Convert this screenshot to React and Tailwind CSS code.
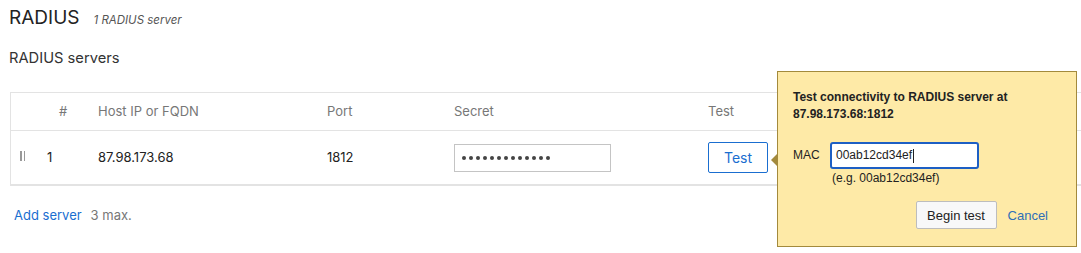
export default function App() {
  return (
    <div className="relative w-[1081px] h-[253px] overflow-hidden bg-white text-[#222] font-['Inter',sans-serif]">
      <div className="pl-[9px] pt-[5px]">
        <div className="flex items-baseline gap-[14px]">
          <h1 className="text-[19px] leading-[26px] text-[#222]">RADIUS</h1>
          <span className="text-[11.5px] italic text-[#555]">1 RADIUS server</span>
        </div>
        <h2 className="mt-[17px] text-[14.7px] leading-[20px] text-[#333]">RADIUS servers</h2>
      </div>

      <div className="ml-[10px] mt-[24px] w-[1090px] border border-[#e3e3e3] border-b-2 text-[13px]">
        <div className="flex h-[38px] items-center border-b border-[#e3e3e3] text-[#777]">
          <div className="w-[87px] pl-[48px]">#</div>
          <div className="w-[229px]">Host IP or FQDN</div>
          <div className="w-[127px]">Port</div>
          <div className="w-[254px]">Secret</div>
          <div>Test</div>
        </div>
        <div className="flex h-[53px] items-center text-[#222]">
          <div className="flex w-[36px] pl-[9px] gap-[2px] -mt-[4px]">
            <span className="block w-[1.5px] h-[10px] bg-[#999]" />
            <span className="block w-[1.5px] h-[10px] bg-[#999]" />
          </div>
          <div className="w-[51px]">1</div>
          <div className="w-[229px]">87.98.173.68</div>
          <div className="w-[127px]">1812</div>
          <div className="w-[254px]">
            <div className="flex h-[28px] w-[157px] items-center gap-[3px] border border-[#c4c4c4] pl-[7px]">
              {Array.from({ length: 13 }).map((_, i) => (
                <span key={i} className="block h-[4px] w-[4px] rounded-full bg-[#444]" />
              ))}
            </div>
          </div>
          <div>
            <button className="h-[31px] w-[60px] rounded-[2px] border border-[#1a6ed0] bg-white text-[14px] text-[#1a6ed0]">
              Test
            </button>
          </div>
        </div>
      </div>

      <div className="ml-[14px] mt-[20px] flex items-baseline gap-[9px] text-[13px]">
        <span className="text-[#1a6ed0]">Add server</span>
        <span className="text-[#777]">3 max.</span>
      </div>

      <div className="absolute left-[777px] top-[71px] w-[300px] h-[176px] border border-[#a38a3c] bg-[#feeaa7] font-['Liberation_Sans',Arial,sans-serif] text-[#222]">
        <span className="absolute -left-[7px] top-[82px] h-0 w-0 border-y-[6px] border-r-[6px] border-y-transparent border-r-[#a38a3c]" />
        <div className="px-[15px] pt-[17px] text-[12px] font-bold leading-[17px]">
          Test connectivity to RADIUS server at
          <br />
          87.98.173.68:1812
        </div>
        <div className="mt-[19px] flex items-start pl-[15px]">
          <span className="mt-[6px] w-[37px] text-[12px] leading-[15px]">MAC</span>
          <div>
            <div className="flex h-[27px] w-[149px] items-center rounded-[3px] border-2 border-[#1d5fc4] bg-white pl-[4px] text-[12px] leading-[15px]">
              00ab12cd34ef<span className="ml-[1px] inline-block h-[14px] w-px bg-[#222]" />
            </div>
            <div className="mt-[2px] pl-[2px] text-[12px] leading-[14px]">(e.g. 00ab12cd34ef)</div>
          </div>
        </div>
        <div className="mt-[16px] flex items-center justify-end gap-[11px] pr-[28px]">
          <button className="h-[28px] w-[81px] rounded-[2px] border border-[#bdbdbd] bg-[#f8f8f8] text-[13px] leading-[15px] text-[#222]">
            Begin test
          </button>
          <span className="text-[13px] leading-[15px] text-[#2d6eb8]">Cancel</span>
        </div>
      </div>
    </div>
  );
}
